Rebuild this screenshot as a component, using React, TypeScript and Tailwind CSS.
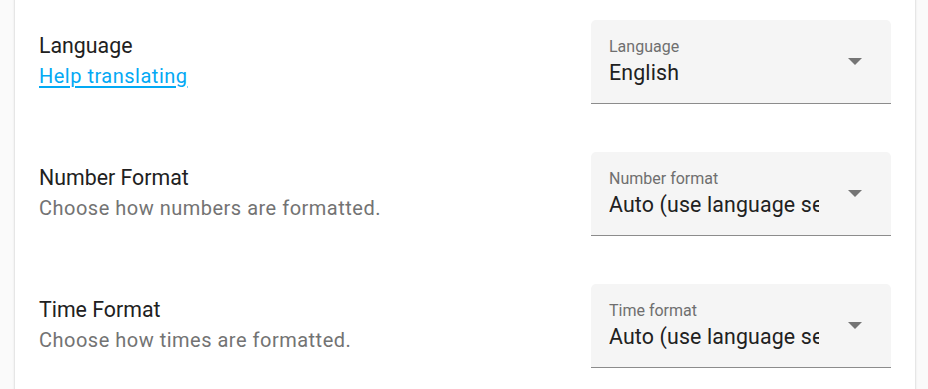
const rows = [
  {
    title: "Language",
    link: "Help translating",
    label: "Language",
    value: "English",
  },
  {
    title: "Number Format",
    description: "Choose how numbers are formatted.",
    label: "Number format",
    value: "Auto (use language setting)",
  },
  {
    title: "Time Format",
    description: "Choose how times are formatted.",
    label: "Time format",
    value: "Auto (use language setting)",
  },
];

type SelectProps = {
  label: string;
  value: string;
};

const Select = ({ label, value }: SelectProps) => {
  return (
    <div className="relative w-[300px] h-[84px] shrink-0 bg-[#f5f5f5] rounded-t-[5px] border-b border-[#8c8c8c]">
      <div className="absolute left-[18px] top-[19px] text-[16px] leading-[16px] text-[#6f6f6f]">
        {label}
      </div>
      <div className="absolute left-[18px] top-[41px] w-[210px] overflow-hidden whitespace-nowrap text-[21.33px] leading-[24px] tracking-[0.15px] text-[#212121]">
        {value}
      </div>
      <svg
        className="absolute left-[257px] top-[38px]"
        width="14"
        height="7"
        viewBox="0 0 14 7"
      >
        <polygon points="0,0 14,0 7,7" fill="#757575" />
      </svg>
    </div>
  );
};

export default function App() {
  return (
    <div
      className="min-h-screen bg-[#fafafa] pl-[14px] pr-[12px] overflow-hidden"
      style={{ fontFamily: "Roboto, 'Noto Sans', sans-serif" }}
    >
      <div className="-mt-[4px] bg-white border-x border-[#e6e6e6] shadow-[0_0_2px_rgba(0,0,0,0.08)] min-h-[400px]">
        {rows.map((row) => (
          <div
            key={row.title}
            className="flex items-center justify-between h-[132px] pl-6 pr-6"
          >
            {/* Left text */}
            <div className="flex flex-col">
              <div className="text-[21.33px] leading-[27px] text-[#212121]">
                {row.title}
              </div>
              {row.link ? (
                <a
                  href="#"
                  className="text-[20px] leading-[34px] tracking-[0.5px] text-[#03a9f4] underline decoration-[1.5px] underline-offset-[3px]"
                >
                  {row.link}
                </a>
              ) : (
                <div className="text-[20px] leading-[34px] tracking-[0.5px] text-[#737373]">
                  {row.description}
                </div>
              )}
            </div>

            {/* Select */}
            <Select label={row.label} value={row.value} />
          </div>
        ))}
      </div>
    </div>
  );
}
